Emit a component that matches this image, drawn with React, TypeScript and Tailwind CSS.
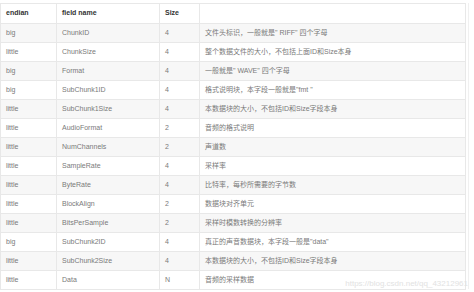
type Row = { endian: string; field: string; size: string; desc: string };

const rows: Row[] = [
  { endian: 'big', field: 'ChunkID', size: '4', desc: '文件头标识，一般就是" RIFF" 四个字母' },
  { endian: 'little', field: 'ChunkSize', size: '4', desc: '整个数据文件的大小，不包括上面ID和Size本身' },
  { endian: 'big', field: 'Format', size: '4', desc: '一般就是" WAVE" 四个字母' },
  { endian: 'big', field: 'SubChunk1ID', size: '4', desc: '格式说明块，本字段一般就是"fmt "' },
  { endian: 'little', field: 'SubChunk1Size', size: '4', desc: '本数据块的大小，不包括ID和Size字段本身' },
  { endian: 'little', field: 'AudioFormat', size: '2', desc: '音频的格式说明' },
  { endian: 'little', field: 'NumChannels', size: '2', desc: '声道数' },
  { endian: 'little', field: 'SampleRate', size: '4', desc: '采样率' },
  { endian: 'little', field: 'ByteRate', size: '4', desc: '比特率，每秒所需要的字节数' },
  { endian: 'little', field: 'BlockAlign', size: '2', desc: '数据块对齐单元' },
  { endian: 'little', field: 'BitsPerSample', size: '2', desc: '采样时模数转换的分辨率' },
  { endian: 'big', field: 'SubChunk2ID', size: '4', desc: '真正的声音数据块，本字段一般是"data"' },
  { endian: 'little', field: 'SubChunk2Size', size: '4', desc: '本数据块的大小，不包括ID和Size字段本身' },
  { endian: 'little', field: 'Data', size: 'N', desc: '音频的采样数据' },
];

const cell = 'border border-[#e8e8e8] px-[5px] py-0 text-left align-middle whitespace-nowrap';

export default function App() {
  return (
    <div className="relative h-[292px] w-[474px] overflow-hidden bg-white pt-[3px] font-['Liberation_Sans','Noto_Sans_CJK_SC',sans-serif] text-[7px]">
      <table className="w-[466px] table-fixed border-collapse">
        <colgroup>
          <col className="w-[56px]" />
          <col className="w-[103px]" />
          <col className="w-[40px]" />
          <col />
        </colgroup>
        <thead>
          <tr className="h-[20px] bg-white text-[#333]">
            <th className={`${cell} font-bold`}>endian</th>
            <th className={`${cell} font-bold`}>field name</th>
            <th className={`${cell} font-bold`}>Size</th>
            <th className={cell}></th>
          </tr>
        </thead>
        <tbody>
          {rows.map((r, i) => (
            <tr key={r.field} className={`h-[19px] text-[#7a7a7a] ${i % 2 === 0 ? 'bg-[#f7f7f7]' : 'bg-white'}`}>
              <td className={cell}>{r.endian}</td>
              <td className={cell}>{r.field}</td>
              <td className={cell}>{r.size}</td>
              <td className={cell}>{r.desc}</td>
            </tr>
          ))}
        </tbody>
      </table>
      <div className="absolute left-[468px] top-[3px] h-[286px] w-px bg-[#f0f0f0]" />
      <div className="absolute right-[6px] top-[278px] text-[8px] text-[#e2e2e2]">https://blog.csdn.net/qq_43212961</div>
    </div>
  );
}
